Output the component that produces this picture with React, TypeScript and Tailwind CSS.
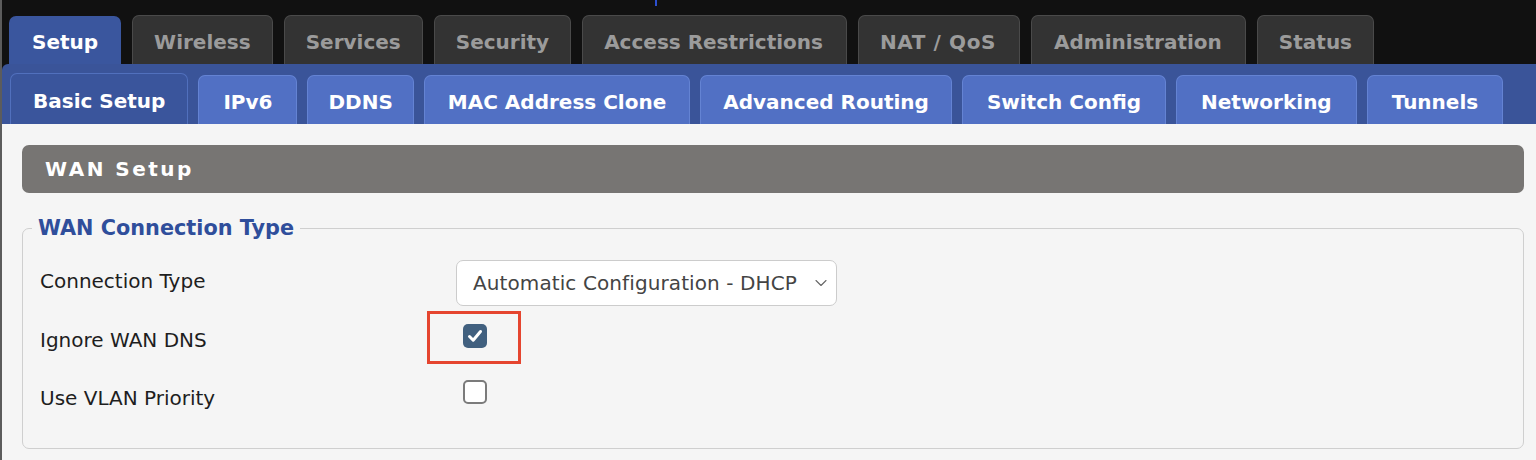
import { ChevronDown } from "lucide-react";

const mainTabs = [
  { label: "Setup", pad: "px-[23px]" },
  { label: "Wireless", pad: "px-[21px]" },
  { label: "Services", pad: "px-[21px]" },
  { label: "Security", pad: "px-[21px]" },
  { label: "Access Restrictions", pad: "pl-[21px] pr-[23px]" },
  { label: "NAT / QoS", pad: "pl-[21px] pr-[23px] tracking-[0.6px]" },
  { label: "Administration", pad: "pl-[22px] pr-[23px]" },
  { label: "Status", pad: "px-[21px]" },
];

const subTabs = [
  { label: "Basic Setup", pad: "px-[22px]" },
  { label: "IPv6", pad: "px-[24px]" },
  { label: "DDNS", pad: "px-[20px]" },
  { label: "MAC Address Clone", pad: "px-[23px]" },
  { label: "Advanced Routing", pad: "px-[22px]" },
  { label: "Switch Config", pad: "px-[24px]" },
  { label: "Networking", pad: "px-[24px]" },
  { label: "Tunnels", pad: "px-[24px]" },
];

function Checkbox({ checked }: { checked: boolean }) {
  if (checked) {
    return (
      <div className="w-[24px] h-[24px] rounded-[5px] bg-[#41607f] flex items-center justify-center">
        <svg width="18" height="18" viewBox="0 0 18 18" fill="none">
          <path
            d="M3.5 9.5 L7.2 13.2 L14.5 4.5"
            stroke="white"
            strokeWidth="3"
            strokeLinecap="round"
            strokeLinejoin="round"
          />
        </svg>
      </div>
    );
  }
  return (
    <div className="w-[24px] h-[24px] rounded-[5px] border-2 border-[#7b7b7b] bg-white" />
  );
}

export default function App() {
  return (
    <div className="min-h-[460px] bg-[#f5f5f5] border-l-2 border-[#5c5c5c] font-['DejaVu_Sans',sans-serif]">
      {/* top nav */}
      <div className="relative bg-[#111111] pt-[15px] pl-[7px]">
        <div className="absolute left-[653px] top-0 w-[2px] h-[6px] bg-[#2c4fcf]" />
        <div className="flex items-end gap-[11px]">
          {mainTabs.map((t, i) =>
            i === 0 ? (
              <div
                key={t.label}
                className={`h-[48px] pt-[4px] flex items-center rounded-t-[7px] bg-[#3a569e] text-white text-[20px] font-bold ${t.pad}`}
              >
                {t.label}
              </div>
            ) : (
              <div
                key={t.label}
                className={`h-[49px] pt-[4px] flex items-center rounded-t-[7px] bg-[#333333] border border-b-0 border-[#4a4a4a] text-[#9b9b9b] text-[20px] font-bold ${t.pad}`}
              >
                {t.label}
              </div>
            ),
          )}
        </div>
      </div>

      {/* sub nav */}
      <div className="bg-[#111111]">
        <div className="h-[60px] bg-[#3a5499] rounded-tl-[6px] pl-[8px] flex items-end gap-[10px]">
          {subTabs.map((t, i) =>
            i === 0 ? (
              <div
                key={t.label}
                className={`h-[51px] pt-[4px] flex items-center rounded-t-[7px] bg-[#3a559c] border border-b-0 border-[#5170bd] text-white text-[20px] font-bold ${t.pad}`}
              >
                {t.label}
              </div>
            ) : (
              <div
                key={t.label}
                className={`h-[49px] pt-[4px] flex items-center rounded-t-[7px] bg-[#5170c4] border border-b-0 border-[#6483d3] text-white text-[20px] font-bold ${t.pad}`}
              >
                {t.label}
              </div>
            ),
          )}
        </div>
      </div>

      {/* content */}
      <div className="pl-[20px] pr-[12px] pt-[21px] pb-[12px]">
        <div className="h-[48px] rounded-[7px] bg-[#777573] flex items-center pl-[23px] text-white text-[20px] font-bold tracking-[2.5px]">
          WAN Setup
        </div>

        <fieldset className="mt-[23px] border border-[#cfcfcf] rounded-[7px] pl-[17px] pr-[17px] pb-[22px]">
          <legend className="-ml-[8px] px-[6px] text-[20.8px] leading-[24px] font-bold text-[#2f4e9b]">
            WAN Connection Type
          </legend>

          <div className="mt-[20px] flex items-center">
            <div className="w-[416px] text-[20px] text-[#1e1e1e] -mt-[4px]">
              Connection Type
            </div>
            <div className="w-[381px] h-[46px] rounded-[7px] border border-[#cccccc] bg-white flex items-center pl-[16px] pr-[5px] text-[20px] text-[#444444]">
              <span className="flex-1 tracking-[0.1px]">Automatic Configuration - DHCP</span>
              <ChevronDown size={20} strokeWidth={1.3} className="text-[#666666]" />
            </div>
          </div>

          <div className="flex h-[58px]">
            <div className="w-[416px] pt-[22px] text-[20px] leading-[24px] text-[#1e1e1e]">
              Ignore WAN DNS
            </div>
            <div className="pt-[18px] pl-[7px]">
              <div className="relative">
                <Checkbox checked />
                <div className="absolute -left-[36px] -top-[13px] w-[94px] h-[53px] border-[3px] border-[#e5452f]" />
              </div>
            </div>
          </div>

          <div className="flex h-[62px]">
            <div className="w-[416px] pt-[22px] text-[20px] leading-[24px] text-[#1e1e1e]">
              Use VLAN Priority
            </div>
            <div className="pt-[16px] pl-[7px]">
              <Checkbox checked={false} />
            </div>
          </div>
        </fieldset>
      </div>
    </div>
  );
}
